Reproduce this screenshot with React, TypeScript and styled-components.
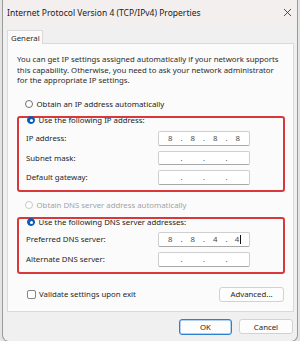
import { Fragment } from 'react';
import styled, { createGlobalStyle } from 'styled-components';

const GlobalStyle = createGlobalStyle`
  html, body {
    margin: 0;
    padding: 0;
    background: #e4e4e4;
  }
  body {
    font-family: 'Noto Sans', 'Liberation Sans', sans-serif;
    font-size: 7.8px;
    color: #1b1b1b;
  }
`;

const Screen = styled.div`
  width: 300px;
  height: 341px;
  overflow: hidden;
  padding-left: 2px;
  box-sizing: border-box;
`;

const Window = styled.div`
  width: 296px;
  height: 342px;
  box-sizing: border-box;
  border: 1px solid #9c9c9c;
  border-top: none;
  border-radius: 0 0 7px 7px;
  background: #f0f0f0;
  display: flex;
  flex-direction: column;
  overflow: hidden;
`;

const TitleBar = styled.div`
  height: 25px;
  display: flex;
  align-items: center;
  justify-content: space-between;
  padding: 0 5px 0 4px;
  background: #f4efef;
  font-size: 8.5px;
  color: #202020;
`;

const CloseIcon = () => (
  <svg width="9" height="9" viewBox="0 0 9 9">
    <path d="M1 1 L8 8 M8 1 L1 8" stroke="#3a3a3a" strokeWidth="0.9" fill="none" />
  </svg>
);

const Body = styled.div`
  flex: 1;
  display: flex;
  flex-direction: column;
  padding: 5px 3px 0 4px;
`;

const Tabs = styled.div`
  display: flex;
  height: 13px;
`;

const Tab = styled.div`
  width: 36px;
  box-sizing: border-box;
  border: 1px solid #dadada;
  border-bottom: none;
  background: #fbfbfb;
  display: flex;
  align-items: center;
  padding-left: 3px;
  color: #2a2a2a;
  margin-bottom: -1px;
  position: relative;
  z-index: 1;
`;

const Panel = styled.div`
  height: 269px;
  box-sizing: border-box;
  border: 1px solid #dadada;
  background: #fbfbfb;
  padding: 10px 0 0 9px;
  display: flex;
  flex-direction: column;
`;

const Description = styled.p`
  margin: 0;
  line-height: 10.5px;
  color: #2b2b2b;
  white-space: nowrap;
`;

const RadioRow = styled.div<{ $disabled?: boolean; $pull?: number }>`
  display: flex;
  align-items: center;
  gap: 3.5px;
  height: 14px;
  padding-left: 8px;
  margin-top: ${({ $pull }) => $pull ?? 0}px;
  color: ${({ $disabled }) => ($disabled ? '#a3a3a3' : '#222')};
`;

const Radio = styled.span<{ $checked?: boolean; $disabled?: boolean }>`
  width: 8px;
  height: 8px;
  box-sizing: border-box;
  border-radius: 50%;
  background: ${({ $checked }) => ($checked ? '#0a5cb6' : '#fff')};
  border: 1px solid
    ${({ $checked, $disabled }) => ($checked ? '#0a5cb6' : $disabled ? '#c9c9c9' : '#707070')};
  display: flex;
  align-items: center;
  justify-content: center;
  &::after {
    content: '';
    display: ${({ $checked }) => ($checked ? 'block' : 'none')};
    width: 3px;
    height: 3px;
    border-radius: 50%;
    background: #fff;
  }
`;

const Highlight = styled.div<{ $top: number; $bottom: number }>`
  width: 268px;
  box-sizing: border-box;
  border: 2px solid #d8383c;
  border-radius: 3px;
  margin-top: ${({ $top }) => $top}px;
  padding-bottom: ${({ $bottom }) => $bottom}px;
  display: flex;
  flex-direction: column;
`;

const Fields = styled.div<{ $top: number; $gap: number }>`
  display: flex;
  flex-direction: column;
  gap: ${({ $gap }) => $gap}px;
  margin-top: ${({ $top }) => $top}px;
`;

const FieldRow = styled.div`
  display: flex;
  align-items: center;
  justify-content: space-between;
  height: 14.5px;
  padding: 0 33px 0 7px;
  color: #262626;
`;

const IpBox = styled.div`
  width: 92px;
  height: 14.5px;
  box-sizing: border-box;
  border: 1px solid #cfcfcf;
  border-bottom-color: #a8a8a8;
  border-radius: 2px;
  background: #fff;
  display: flex;
  align-items: center;
  color: #4a4a4a;
`;

const Octet = styled.span`
  flex: 1;
  display: flex;
  justify-content: center;
  align-items: center;
`;

const Dot = styled.span`
  width: 0;
  display: flex;
  justify-content: center;
  color: #5a5a5a;
`;

const Caret = styled.span`
  display: inline-block;
  width: 1px;
  height: 9px;
  background: #111;
  margin-left: 0.5px;
`;

const BottomRow = styled.div`
  display: flex;
  align-items: center;
  justify-content: space-between;
  width: 267px;
  margin-top: 13px;
`;

const CheckLabel = styled.div`
  display: flex;
  align-items: center;
  gap: 3px;
  padding-left: 10px;
  color: #262626;
`;

const CheckBox = styled.span`
  width: 9px;
  height: 9px;
  box-sizing: border-box;
  border: 1px solid #858585;
  border-radius: 2px;
  background: #fff;
`;

const Button = styled.div<{ $primary?: boolean; $w: number }>`
  width: ${({ $w }) => $w}px;
  height: ${({ $primary }) => ($primary ? 16 : 15)}px;
  box-sizing: border-box;
  border: 1px solid ${({ $primary }) => ($primary ? '#2d7fd0' : '#d2d2d2')};
  box-shadow: ${({ $primary }) => ($primary ? 'inset 0 0 0 0.5px #6aa6e0' : 'none')};
  border-radius: 3px;
  background: #fdfdfd;
  display: flex;
  align-items: center;
  justify-content: center;
  color: #262626;
`;

const Footer = styled.div`
  display: flex;
  justify-content: flex-end;
  gap: 7px;
  padding: 7px 1px 0 0;
`;

const IpField = ({ values, caret }: { values: string[]; caret?: boolean }) => (
  <IpBox>
    {values.map((v, i) => (
      <Fragment key={i}>
        {i > 0 && <Dot>.</Dot>}
        <Octet>
          {v}
          {caret && i === values.length - 1 && <Caret />}
        </Octet>
      </Fragment>
    ))}
  </IpBox>
);

const empty = ['', '', '', ''];

export default function App() {
  return (
    <>
      <GlobalStyle />
      <Screen>
        <Window>
          <TitleBar>
            <span>Internet Protocol Version 4 (TCP/IPv4) Properties</span>
            <CloseIcon />
          </TitleBar>
          <Body>
            <Tabs>
              <Tab>General</Tab>
            </Tabs>
            <Panel>
              <Description>
                You can get IP settings assigned automatically if your network supports
                <br />
                this capability. Otherwise, you need to ask your network administrator
                <br />
                for the appropriate IP settings.
              </Description>
              <RadioRow $pull={11.5}>
                <Radio />
                Obtain an IP address automatically
              </RadioRow>
              <Highlight $top={5} $bottom={5.5}>
                <RadioRow $pull={-5}>
                  <Radio $checked />
                  Use the following IP address:
                </RadioRow>
                <Fields $top={4} $gap={5}>
                  <FieldRow>
                    IP address:
                    <IpField values={['8', '8', '8', '8']} />
                  </FieldRow>
                  <FieldRow>
                    Subnet mask:
                    <IpField values={empty} />
                  </FieldRow>
                  <FieldRow>
                    Default gateway:
                    <IpField values={empty} />
                  </FieldRow>
                </Fields>
              </Highlight>
              <RadioRow $pull={6} $disabled>
                <Radio $disabled />
                Obtain DNS server address automatically
              </RadioRow>
              <Highlight $top={5} $bottom={5}>
                <RadioRow $pull={-4}>
                  <Radio $checked />
                  Use the following DNS server addresses:
                </RadioRow>
                <Fields $top={3} $gap={5.5}>
                  <FieldRow>
                    Preferred DNS server:
                    <IpField values={['8', '8', '4', '4']} caret />
                  </FieldRow>
                  <FieldRow>
                    Alternate DNS server:
                    <IpField values={empty} />
                  </FieldRow>
                </Fields>
              </Highlight>
              <BottomRow>
                <CheckLabel>
                  <CheckBox />
                  Validate settings upon exit
                </CheckLabel>
                <Button $w={65}>Advanced...</Button>
              </BottomRow>
            </Panel>
            <Footer>
              <Button $primary $w={53}>OK</Button>
              <Button $w={54}>Cancel</Button>
            </Footer>
          </Body>
        </Window>
      </Screen>
    </>
  );
}
